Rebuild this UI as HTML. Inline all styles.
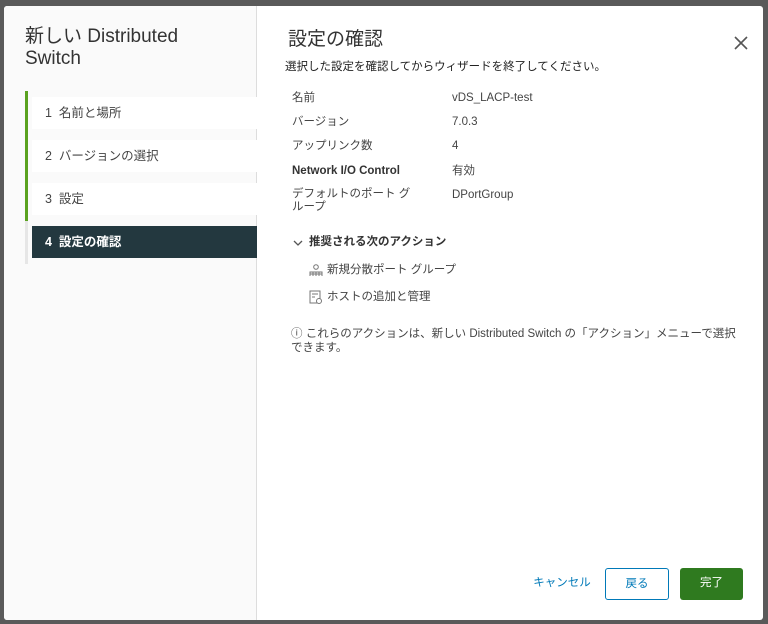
<!DOCTYPE html>
<html><head><meta charset="utf-8"><style>
*{margin:0;padding:0;box-sizing:border-box}
body{width:768px;height:624px;background:#5a5a5a;font-family:"Liberation Sans","Noto Sans CJK JP",sans-serif;position:relative;overflow:hidden;color:#333}
.modal{position:absolute;left:4px;top:6px;width:759px;height:614px;background:#fff;border-radius:3px;overflow:hidden}
.left{position:absolute;left:0;top:0;width:253px;height:614px;background:#fafafa;border-right:1px solid #ddd}
.title{position:absolute;left:21px;top:20px;font-size:19px;line-height:22px;color:#333}
.track{position:absolute;left:21px;top:85px;width:3px;height:173px;background:#e6e6e6}
.green{position:absolute;left:21px;top:85px;width:3px;height:130px;background:#5aa220}
.step{position:absolute;left:28px;width:225px;height:32px;background:#fff;font-size:12.5px;line-height:32px;padding-left:13px;color:#444}
.step.act{background:#23383f;color:#fff;font-weight:bold}
.h{position:absolute;left:284px;top:18px;font-size:19px;color:#333}
.sub{position:absolute;left:281px;top:52px;font-size:11.5px;color:#222}
.r{position:absolute;font-size:11.5px;line-height:14px;color:#444;white-space:nowrap}
.close{position:absolute;left:730px;top:30px}
.btn{position:absolute;top:562px;height:32px;font-size:11.5px;line-height:30px;text-align:center;border-radius:3px}
</style></head><body>
<div class="modal">
<div class="left">
<div class="title">新しい Distributed<br>Switch</div>
<div class="track"></div><div class="green"></div>
<div class="step" style="top:91px">1&nbsp;&nbsp;名前と場所</div>
<div class="step" style="top:134px">2&nbsp;&nbsp;バージョンの選択</div>
<div class="step" style="top:177px">3&nbsp;&nbsp;設定</div>
<div class="step act" style="top:220px">4&nbsp;&nbsp;設定の確認</div>
</div>
<div class="h">設定の確認</div>
<svg class="close" width="14" height="14" viewBox="0 0 14 14"><path d="M1 1L13 13M13 1L1 13" stroke="#555" stroke-width="1.6"/></svg>
<div class="sub">選択した設定を確認してからウィザードを終了してください。</div>
<div class="r" style="left:288px;top:85px">名前</div><div class="r" style="left:448px;top:85px">vDS_LACP-test</div>
<div class="r" style="left:288px;top:109px">バージョン</div><div class="r" style="left:448px;top:109px">7.0.3</div>
<div class="r" style="left:288px;top:133px">アップリンク数</div><div class="r" style="left:448px;top:133px">4</div>
<div class="r" style="left:288px;top:158px;font-weight:bold;color:#333">Network I/O Control</div><div class="r" style="left:448px;top:158px">有効</div>
<div class="r" style="left:288px;top:182px;line-height:13px">デフォルトのポート グ<br>ループ</div><div class="r" style="left:448px;top:182px">DPortGroup</div>
<svg style="position:absolute;left:288px;top:232px" width="12" height="10"><path d="M2 3L6 7L10 3" stroke="#555" stroke-width="1.3" fill="none"/></svg>
<div class="r" style="left:305px;top:229px;font-weight:bold;color:#333">推奨される次のアクション</div>
<svg style="position:absolute;left:305px;top:257px" width="14" height="14"><circle cx="7" cy="4" r="2.3" fill="none" stroke="#777"/><path d="M1 13V9H13V13M1 11H13M4 9v4M7 9v4M10 9v4" stroke="#777" fill="none"/></svg>
<div class="r" style="left:323px;top:257px">新規分散ポート グループ</div>
<svg style="position:absolute;left:305px;top:284px" width="14" height="14"><rect x="1" y="1" width="10" height="12" fill="none" stroke="#777"/><path d="M3 4H9M3 7H6" stroke="#777"/><circle cx="10" cy="11" r="2.5" fill="#fff" stroke="#777"/></svg>
<div class="r" style="left:323px;top:284px">ホストの追加と管理</div>
<div class="r" style="left:287px;top:321px;line-height:14px">ⓘ これらのアクションは、新しい Distributed Switch の「アクション」メニューで選択<br>できます。</div>
<div class="btn" style="left:526px;width:64px;color:#0079b8">キャンセル</div>
<div class="btn" style="left:601px;width:64px;border:1px solid #0079b8;color:#0079b8">戻る</div>
<div class="btn" style="left:676px;width:63px;background:#2f7a1f;color:#fff">完了</div>
</div>
</body></html>
